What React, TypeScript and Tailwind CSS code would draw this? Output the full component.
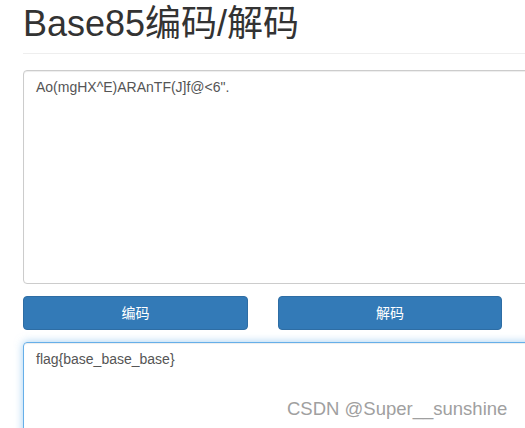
import React from 'react';

const FONT = { fontFamily: '"Liberation Sans", Arial, "Noto Sans CJK SC", sans-serif' };

export default function App() {
  return (
    <div className="relative w-[525px] h-[428px] overflow-hidden bg-white pl-[23px]" style={FONT}>
      {/* header */}
      <div className="w-[520px] pt-[4px] pb-[9px] border-b border-[#eeeeee]">
        <h1 className="text-[36px] leading-[40px] text-[#333333] font-normal">Base85编码/解码</h1>
      </div>

      {/* input */}
      <textarea
        className="block mt-[16px] w-[520px] h-[214px] resize-none rounded-[4px] border border-[#cccccc] px-[12px] py-[6px] text-[14px] leading-[20px] text-[#555555] shadow-[inset_0_1px_1px_rgba(0,0,0,0.075)] outline-none"
        style={FONT}
        defaultValue={'Ao(mgHX^E)ARAnTF(J]f@<6".'}
      />

      {/* buttons */}
      <div className="flex gap-[30px] mt-[12px]">
        <button className="w-[225px] h-[34px] rounded-[4px] border border-[#2e6da4] bg-[#337ab7] text-[14px] text-white">
          编码
        </button>
        <button className="w-[224px] h-[34px] rounded-[4px] border border-[#2e6da4] bg-[#337ab7] text-[14px] text-white">
          解码
        </button>
      </div>

      {/* output */}
      <textarea
        className="block mt-[12px] w-[520px] h-[214px] resize-none rounded-[4px] border border-[#66afe9] px-[12px] py-[6px] text-[14px] leading-[20px] text-[#555555] shadow-[inset_0_1px_1px_rgba(0,0,0,0.075),0_0_8px_rgba(102,175,233,0.6)] outline-none"
        style={FONT}
        defaultValue="flag{base_base_base}"
      />

      {/* watermark */}
      <div className="absolute left-[287px] top-[398px] text-[18.5px] leading-[22px] text-[#a0a0a0] whitespace-nowrap">
        CSDN @Super__sunshine
      </div>
    </div>
  );
}
